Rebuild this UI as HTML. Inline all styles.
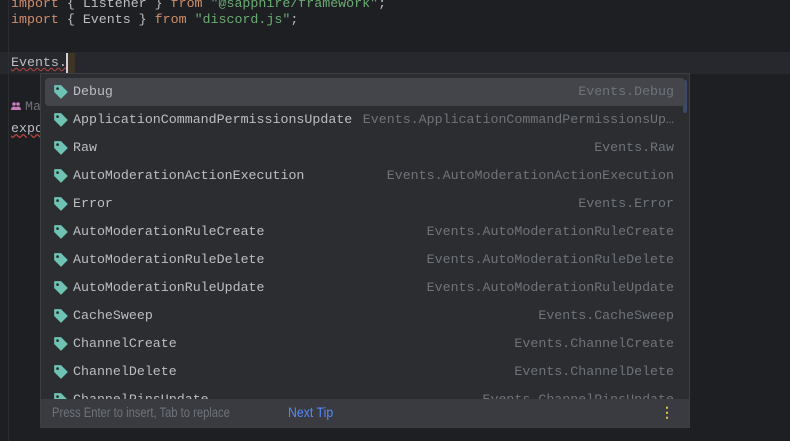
<!DOCTYPE html>
<html><head><meta charset="utf-8"><style>
body{margin:0;width:790px;height:441px;background:#1e1f22;overflow:hidden;position:relative;font-family:"Liberation Mono",monospace;font-size:13.3px;color:#bcbec4}
.ln{position:absolute;left:11px;white-space:pre;line-height:22px}
.kw{color:#cf8e6d}.str{color:#6aab73}
.gut{position:absolute;left:8px;top:0;bottom:0;width:1px;background:#2b2d30}
.cur{position:absolute;left:0;right:0;top:52px;height:22px;background:#26282e}
.pop{position:absolute;left:40px;top:73px;width:650px;height:355px;background:#2b2d30;border:1px solid #3c3e42;box-sizing:border-box;overflow:hidden}
.row{position:absolute;left:4px;width:640px;height:28px;line-height:28px}
.row.sel{background:#43454a;border-radius:4px}
.row svg{position:absolute;left:8px;top:6px}
.nm{position:absolute;left:28px;color:#bcbec4}
.ty{position:absolute;right:11px;color:#6f737a}
.foot{position:absolute;left:0;right:0;bottom:0;height:28px;background:#393b40;font-family:"Liberation Sans",sans-serif;font-size:14px;line-height:27px;color:#6f737a}
.foot span.t{position:absolute;left:11px;transform:scaleX(0.8);transform-origin:left center;white-space:nowrap}
.foot span.n{position:absolute;left:247px;color:#548af7;transform:scaleX(0.88);transform-origin:left center;white-space:nowrap}
.sb{position:absolute;left:642px;top:6px;width:4px;height:33px;background:#3b4a6a;border-radius:2px}
</style></head><body>
<div class="cur"></div>
<div class="gut"></div>
<div class="ln" style="top:-7px"><span class="kw">import</span> { Listener } <span class="kw">from</span> <span class="str">"@sapphire/framework"</span>;</div>
<div class="ln" style="top:9px"><span class="kw">import</span> { Events } <span class="kw">from</span> <span class="str">"discord.js"</span>;</div>
<div class="ln" style="top:52px;text-decoration:underline wavy #b8433e;text-decoration-thickness:1px">Events.</div>
<div style="position:absolute;left:66px;top:53px;width:2px;height:20px;background:#ced0d6"></div>
<div style="position:absolute;left:68px;top:53px;width:7px;height:20px;background:#3e3526"></div>
<svg style="position:absolute;left:11px;top:102px" width="10" height="8" viewBox="0 0 10 8"><circle cx="3" cy="2" r="1.8" fill="#c77dbb"/><circle cx="7" cy="2" r="1.8" fill="#c77dbb"/><path d="M0 8Q0 4.5 3 4.5Q6 4.5 6 8Z M4 8Q4 4.5 7 4.5Q10 4.5 10 8Z" fill="#c77dbb"/></svg>
<div class="ln" style="top:96px;left:25px;color:#6f737a">Ma</div>
<div class="ln" style="top:118px;text-decoration:underline wavy #b8433e">expo</div>
<div class="pop">
<div class="sb"></div>
<div id="rows"></div>
<div class="foot"><span class="t">Press Enter to insert, Tab to replace</span><span class="n">Next Tip</span><span style="position:absolute;right:15px;color:#e0c24a;font-weight:bold">⋮</span></div>
</div>
<script>
var d=[["Debug","Events.Debug"],["ApplicationCommandPermissionsUpdate","Events.ApplicationCommandPermissionsUp…"],["Raw","Events.Raw"],["AutoModerationActionExecution","Events.AutoModerationActionExecution"],["Error","Events.Error"],["AutoModerationRuleCreate","Events.AutoModerationRuleCreate"],["AutoModerationRuleDelete","Events.AutoModerationRuleDelete"],["AutoModerationRuleUpdate","Events.AutoModerationRuleUpdate"],["CacheSweep","Events.CacheSweep"],["ChannelCreate","Events.ChannelCreate"],["ChannelDelete","Events.ChannelDelete"],["ChannelPinsUpdate","Events.ChannelPinsUpdate"]];
var h="";d.forEach(function(r,i){h+='<div class="row'+(i==0?' sel':'')+'" style="top:'+(4+i*28)+'px"><svg width="16" height="16" viewBox="0 0 14 14"><path d="M1 1.5Q1 1 1.5 1H7L13 7L7 13L1 7Z" fill="#6fc3b5"/><circle cx="4" cy="4" r="1.2" fill="#2b2d30"/></svg><span class="nm">'+r[0]+'</span><span class="ty">'+r[1]+'</span></div>'});
document.getElementById("rows").innerHTML=h;
</script>
</body></html>
